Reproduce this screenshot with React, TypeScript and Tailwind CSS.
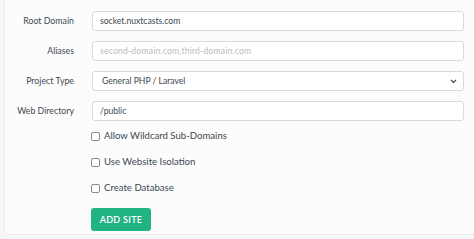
export default function App() {
  const font = { fontFamily: 'Lato, "Noto Sans", sans-serif' };
  const rows = [
    { label: 'Root Domain', value: 'socket.nuxtcasts.com' },
    { label: 'Aliases', placeholder: 'second-domain.com,third-domain.com' },
  ];

  return (
    <div className="w-[474px] h-[239px] bg-[#f6f6f6] overflow-hidden" style={font}>
      <div className="ml-[4px] w-[480px] h-[235px] bg-[#fcfcfc] border-l border-b border-[#ececec] pt-[11px]">
        <div className="flex flex-col gap-[10px] w-[459px]">
          {rows.map((r) => (
            <div key={r.label} className="flex items-center">
              <label className="w-[69px] text-right text-[8.8px] text-[#3d4852]">{r.label}</label>
              <input
                defaultValue={r.value}
                placeholder={r.placeholder}
                className="ml-[18px] flex-1 h-[20px] rounded-[3px] border border-[#dadada] bg-white px-[7px] text-[8.6px] text-[#3d4852] placeholder:text-[#b8bcc0] placeholder:tracking-[0.2px] outline-none"
              />
            </div>
          ))}
          <div className="flex items-center">
            <label className="w-[69px] text-right text-[8.8px] text-[#3d4852]">Project Type</label>
            <div className="ml-[18px] flex-1 h-[20px] rounded-[3px] border border-[#dadada] bg-white px-[9px] flex items-center justify-between text-[8.6px] text-[#3d4852]">
              <span>General PHP / Laravel</span>
              <svg width="7" height="5" viewBox="0 0 7 5" className="mr-[-3px]">
                <path d="M1 1l2.5 2.5L6 1" fill="none" stroke="#555" strokeWidth="1.3" />
              </svg>
            </div>
          </div>
          <div className="flex items-center">
            <label className="w-[69px] text-right text-[8.8px] text-[#3d4852]">Web Directory</label>
            <input
              defaultValue="/public"
              className="ml-[18px] flex-1 h-[20px] rounded-[3px] border border-[#dadada] bg-white px-[7px] text-[8.6px] text-[#3d4852] outline-none"
            />
          </div>
        </div>

        <div className="ml-[86px] mt-[9px] flex flex-col gap-[14px]">
          {['Allow Wildcard Sub-Domains', 'Use Website Isolation', 'Create Database'].map((t) => (
            <label key={t} className="flex items-center gap-[4px] h-[12px] text-[9.6px] text-[#3d4852]">
              <span className="w-[9px] h-[9px] rounded-[2px] border border-[#8a8a8a] bg-white" />
              {t}
            </label>
          ))}
        </div>

        <button className="ml-[86px] mt-[14px] w-[60px] h-[23px] rounded-[3px] bg-[#22b383] text-white text-[9px] font-semibold tracking-[0.3px]">
          ADD SITE
        </button>
      </div>
    </div>
  );
}
